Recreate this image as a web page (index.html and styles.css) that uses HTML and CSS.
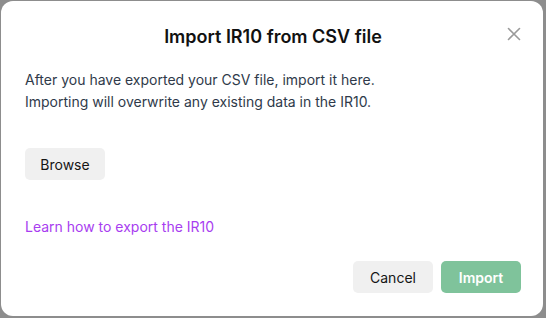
FILE: index.html
```html
<!DOCTYPE html>
<html lang="en">
<head>
<meta charset="utf-8">
<link rel="stylesheet" href="styles.css">
</head>
<body>
<div class="modal">
  <div class="header">
    <h1 class="title">Import IR10 from CSV file</h1>
    <button class="close" aria-label="Close">
      <svg width="14" height="14" viewBox="0 0 14 14"><path d="M1.5 1.5 L12.5 12.5 M12.5 1.5 L1.5 12.5" stroke="#9a9a9a" stroke-width="1.6" stroke-linecap="round" fill="none"/></svg>
    </button>
  </div>
  <p class="desc">After you have exported your CSV file, import it here.<br>Importing will overwrite any existing data in the IR10.</p>
  <button class="btn btn-grey browse">Browse</button>
  <a class="link" href="#">Learn how to export the IR10</a>
  <div class="footer">
    <button class="btn btn-grey">Cancel</button>
    <button class="btn btn-green">Import</button>
  </div>
</div>
</body>
</html>
```
FILE: styles.css
```css
html, body {
  margin: 0;
  padding: 0;
}
body {
  background: #8d8d8d;
  width: 546px;
  height: 318px;
  overflow: hidden;
  font-family: Inter, "Noto Sans", sans-serif;
}
.modal {
  box-sizing: border-box;
  margin: 1px 3px 2px 1px;
  height: 315px;
  background: #ffffff;
  border-radius: 12px;
  padding: 24px 22px 23px 24px;
  display: flex;
  flex-direction: column;
  align-items: flex-start;
}
.header {
  position: relative;
  width: 100%;
}
.title {
  margin: 0;
  text-align: center;
  font-size: 18px;
  line-height: 24px;
  font-weight: 600;
  color: #111111;
}
.close {
  position: absolute;
  right: -3px;
  top: -1px;
  width: 20px;
  height: 20px;
  padding: 0;
  border: 0;
  background: none;
  display: flex;
  align-items: center;
  justify-content: center;
}
.desc {
  margin: 20px 0 0;
  font-size: 14px;
  line-height: 22px;
  color: #2f3a4a;
}
.btn {
  box-sizing: border-box;
  width: 80px;
  height: 32px;
  border: 0;
  border-radius: 5px;
  font-family: Inter, "Noto Sans", sans-serif;
  font-size: 14px;
  padding: 0;
}
.btn-grey {
  background: #f0f0f0;
  color: #151515;
  font-weight: 400;
}
.btn-green {
  background: #7fc39b;
  color: #ffffff;
  font-weight: 600;
}
.browse {
  margin-top: 35px;
}
.link {
  margin-top: 37px;
  font-size: 14px;
  line-height: 20px;
  color: #a83df0;
  text-decoration: none;
}
.footer {
  margin-top: 24px;
  align-self: stretch;
  display: flex;
  justify-content: flex-end;
  gap: 8px;
}
```
